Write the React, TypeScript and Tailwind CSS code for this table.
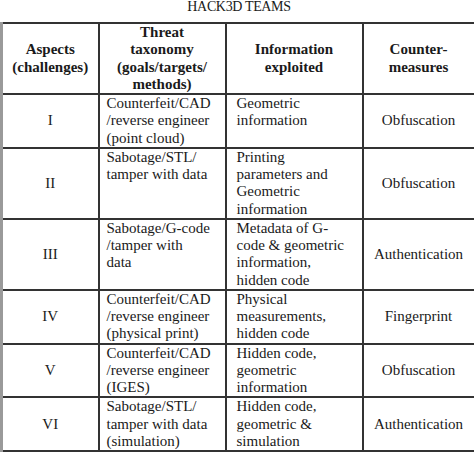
const rows = [
  {
    aspect: "I",
    threat: ["Counterfeit/CAD", "/reverse engineer", "(point cloud)"],
    info: ["Geometric", "information"],
    counter: "Obfuscation",
  },
  {
    aspect: "II",
    threat: ["Sabotage/STL/", "tamper with data"],
    info: ["Printing", "parameters and", "Geometric", "information"],
    counter: "Obfuscation",
  },
  {
    aspect: "III",
    threat: ["Sabotage/G-code", "/tamper with", "data"],
    info: ["Metadata of G-", "code & geometric", "information,", "hidden code"],
    counter: "Authentication",
  },
  {
    aspect: "IV",
    threat: ["Counterfeit/CAD", "/reverse engineer", "(physical print)"],
    info: ["Physical", "measurements,", "hidden code"],
    counter: "Fingerprint",
  },
  {
    aspect: "V",
    threat: ["Counterfeit/CAD", "/reverse engineer", "(IGES)"],
    info: ["Hidden code,", "geometric", "information"],
    counter: "Obfuscation",
  },
  {
    aspect: "VI",
    threat: ["Sabotage/STL/", "tamper with data", "(simulation)"],
    info: ["Hidden code,", "geometric &", "simulation"],
    counter: "Authentication",
  },
];

function Lines({ items }: { items: string[] }) {
  return (
    <>
      {items.map((l, i) => (
        <div key={i} className="whitespace-nowrap font-['Liberation_Serif','Times_New_Roman',serif]">
          {l}
        </div>
      ))}
    </>
  );
}

export default function App() {
  // quirks-mode tables don't inherit font, so every cell sets it itself
  const cell =
    "border-2 border-[#333] p-0 font-['Liberation_Serif','Times_New_Roman',serif] text-[15px] leading-[17.25px] text-[#1a1a1a]";
  const first = "border-l-[3px] border-l-[#9a9a9a]";
  return (
    <main className="h-[452px] w-[474px] overflow-hidden bg-white font-['Liberation_Serif','Times_New_Roman',serif] text-[#1a1a1a]">
      <div className="flex h-[22px] justify-center overflow-hidden">
        <div className="-mt-[1px] pl-[4px] text-[14px] leading-[16px] tracking-tight">
          HACK3D TEAMS
        </div>
      </div>
      <table className="w-[473px] table-fixed border-collapse">
        <colgroup>
          <col className="w-[97px]" />
          <col className="w-[127px]" />
          <col className="w-[137px]" />
          <col className="w-[112px]" />
        </colgroup>
        <thead>
          <tr>
            <th className={`${cell} ${first} text-center align-middle font-bold`}>
              <Lines items={["Aspects", "(challenges)"]} />
            </th>
            <th className={`${cell} text-center align-middle font-bold`}>
              <Lines items={["Threat", "taxonomy", "(goals/targets/", "methods)"]} />
            </th>
            <th className={`${cell} text-center align-middle font-bold`}>
              <Lines items={["Information", "exploited"]} />
            </th>
            <th className={`${cell} text-center align-middle font-bold`}>
              <Lines items={["Counter-", "measures"]} />
            </th>
          </tr>
        </thead>
        <tbody>
          {rows.map((r) => (
            <tr key={r.aspect}>
              <td className={`${cell} ${first} text-center align-middle`}>{r.aspect}</td>
              <td className={`${cell} pl-[7px] align-top`}>
                <Lines items={r.threat} />
              </td>
              <td className={`${cell} pl-[10px] align-top`}>
                <Lines items={r.info} />
              </td>
              <td className={`${cell} text-center align-middle`}>{r.counter}</td>
            </tr>
          ))}
        </tbody>
      </table>
    </main>
  );
}
